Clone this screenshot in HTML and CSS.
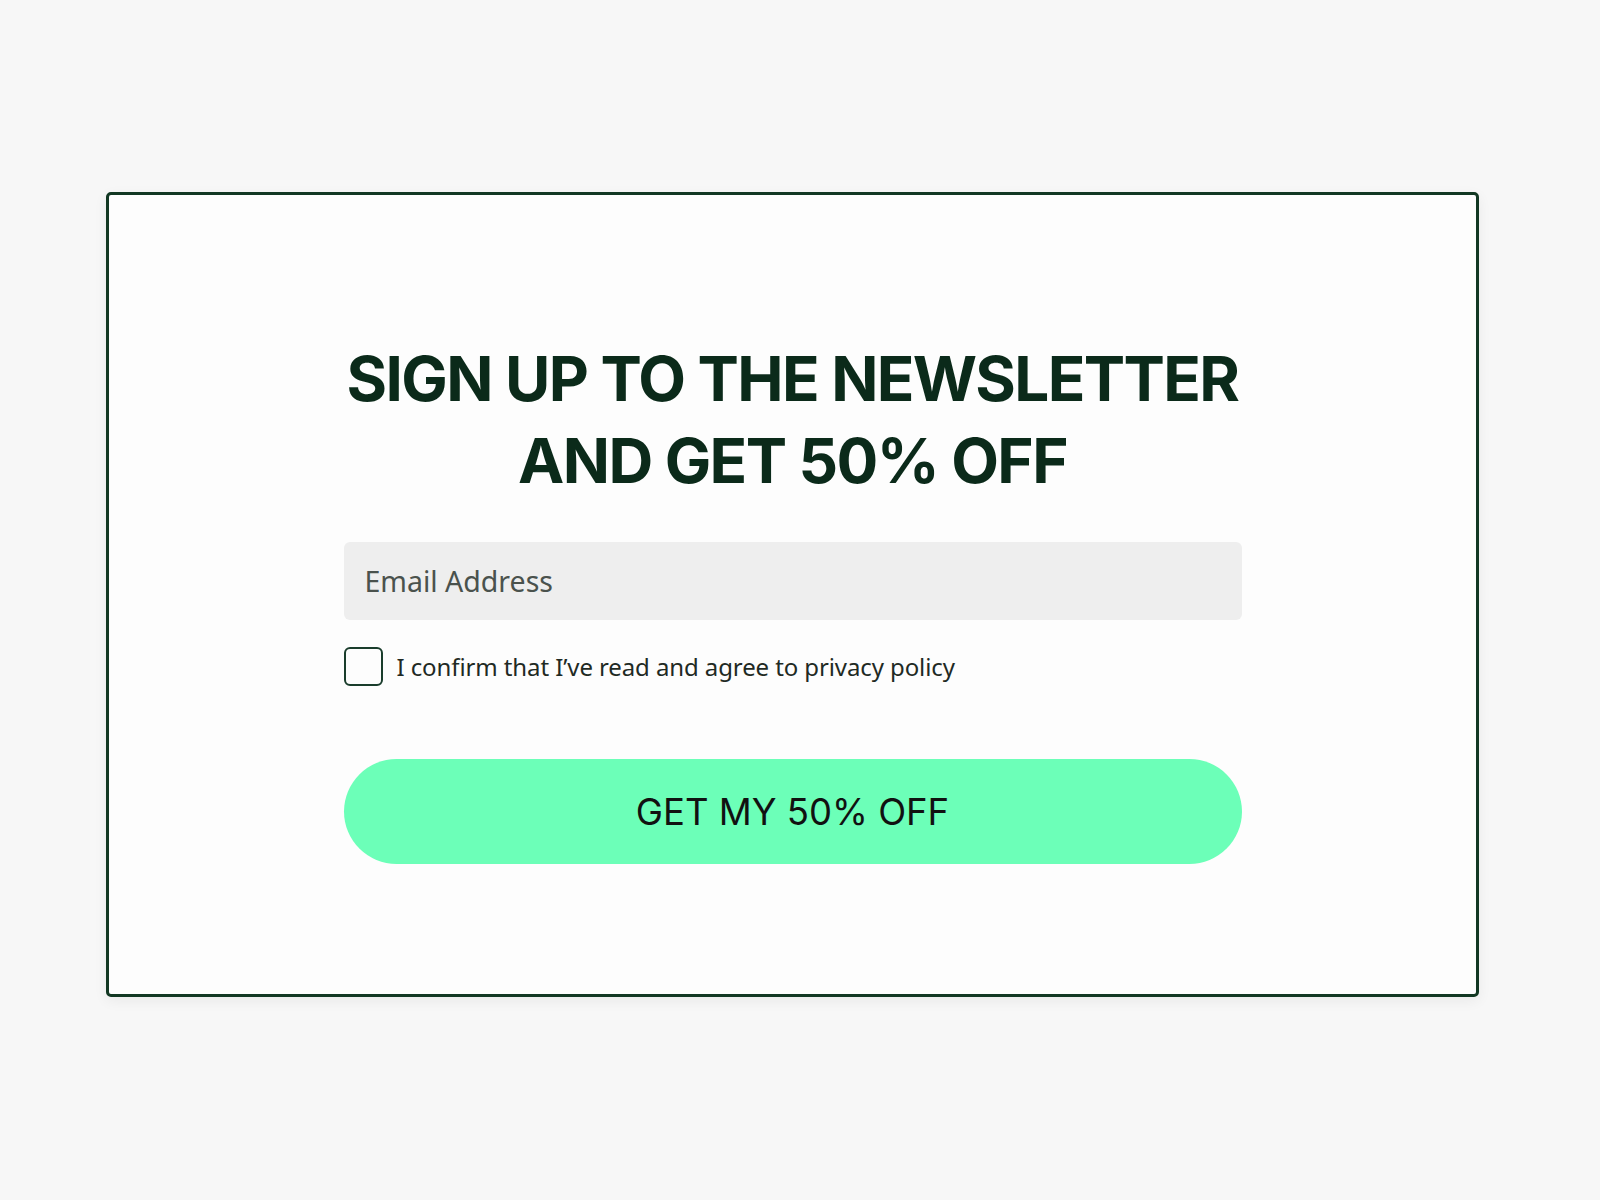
FILE: index.html
```html
<!doctype html>
<html lang="en">
  <head>
    <meta charset="UTF-8" />
    <meta name="viewport" content="width=device-width, initial-scale=1.0" />
    <title>Newsletter Signup</title>
    <link rel="stylesheet" href="styles.css">
  </head>
  <body>
    <div class="page">
      <section class="signup-card">
        <form class="signup-form">
          <h1>SIGN UP TO THE NEWSLETTER<br />AND GET 50% OFF</h1>

          <input class="email-input" type="email" placeholder="Email Address" />

          <label class="consent">
            <input type="checkbox" />
            <span class="consent-box"></span>
            <span>I confirm that I’ve read and agree to privacy policy</span>
          </label>

          <button class="cta" type="button">GET MY 50% OFF</button>
        </form>
      </section>
    </div>
  </body>
</html>
```

FILE: styles.css
```css
* {
  margin: 0;
  padding: 0;
  box-sizing: border-box;
}

body {
  font-family: "Noto Sans", "Open Sans", sans-serif;
  background: #f7f7f7;
  color: #1f2a24;
  min-height: 100vh;
}

.page {
  padding: 192px 121px 0 106px;
}

.signup-card {
  width: 1373px;
  height: 805px;
  background: #fdfdfd;
  border: 3px solid #123823;
  border-radius: 5px;
  box-shadow: 0 4px 14px rgba(0, 0, 0, 0.06);
  padding-top: 143px;
}

.signup-form {
  width: 898px;
  margin: 0 auto;
  display: flex;
  flex-direction: column;
}

h1 {
  font-family: Inter, "Noto Sans", sans-serif;
  font-weight: 700;
  font-size: 62px;
  line-height: 82px;
  letter-spacing: -1.6px;
  white-space: nowrap;
  text-align: center;
  color: #0b2a1a;
  margin-bottom: 40px;
}

.email-input {
  height: 78px;
  border: none;
  border-radius: 6px;
  background: #eeeeee;
  padding: 0 21px;
  font-family: "Noto Sans", sans-serif;
  font-size: 28.5px;
  color: #333;
  outline: none;
}

.email-input::placeholder {
  color: #4a524d;
}

.consent {
  display: flex;
  align-items: center;
  gap: 14px;
  margin-top: 27px;
  font-size: 24px;
  letter-spacing: -0.1px;
  color: #1f2a24;
  cursor: pointer;
}

.consent input {
  display: none;
}

.consent-box {
  width: 39px;
  height: 39px;
  border: 2px solid #1a3d2c;
  border-radius: 6px;
  flex-shrink: 0;
}

.cta {
  margin-top: 73px;
  height: 105px;
  border: none;
  border-radius: 53px;
  background: #6cffb8;
  font-family: Inter, "Noto Sans", sans-serif;
  font-size: 36.5px;
  font-weight: 400;
  color: #111;
  cursor: pointer;
}
```
